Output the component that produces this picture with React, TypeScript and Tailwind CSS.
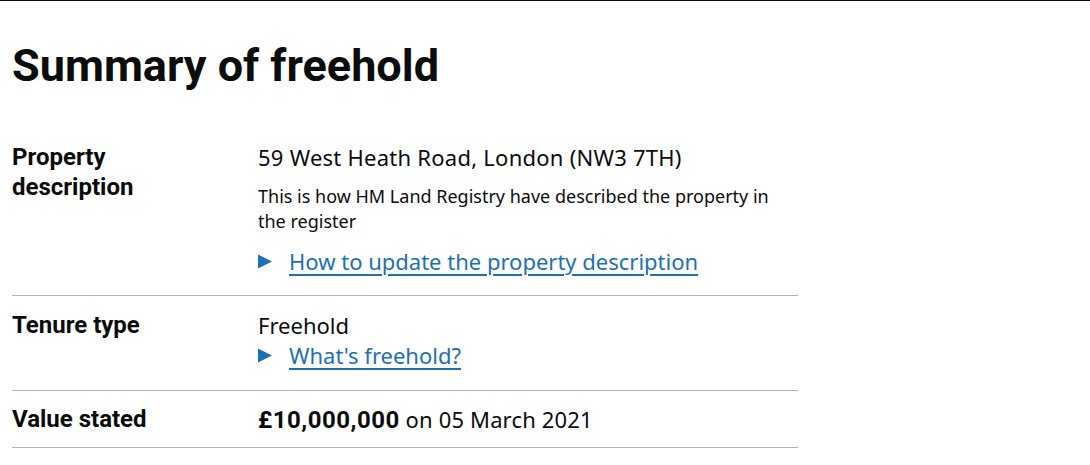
import React from "react";

const noto = { fontFamily: '"Noto Sans", Arial, sans-serif' };
const roboto = { fontFamily: 'Roboto, Arial, sans-serif' };

function Triangle() {
  return (
    <svg width="14" height="15" viewBox="0 0 14 15" className="shrink-0">
      <polygon points="0,0.5 14,7.5 0,14.5" fill="#1d70b8" />
    </svg>
  );
}

function DetailsLink({ children }: { children: React.ReactNode }) {
  return (
    <div className="flex items-center gap-[17px]">
      <Triangle />
      <a
        href="#"
        className="text-[22px] leading-[30px] text-[#1d70b8] underline decoration-[2px] underline-offset-[4px]"
        style={noto}
      >
        {children}
      </a>
    </div>
  );
}

function Label({ children }: { children: React.ReactNode }) {
  return (
    <dt className="pr-[36px] text-[24px] font-bold leading-[30px]" style={roboto}>
      {children}
    </dt>
  );
}

export default function App() {
  return (
    <div
      className="min-h-[465px] w-[1090px] bg-white border-t border-[#0b0c0c] text-[#0b0c0c]"
      style={noto}
    >
      <div className="px-[12px]">
        <h1 className="pt-[40px] mb-[39px] text-[45px] font-bold leading-[50px]" style={roboto}>
          Summary of freehold
        </h1>
        <dl className="w-[786px]">
          <div className="grid grid-cols-[246px_1fr] border-b border-[#b1b4b6] pt-[12px] pb-[19px]">
            <Label>Property description</Label>
            <dd>
              <p className="text-[22px] leading-[30px] tracking-[0.25px]">
                59 West Heath Road, London (NW3 7TH)
              </p>
              <p className="mt-[12px] max-w-[530px] text-[18px] leading-[25px]">
                This is how HM Land Registry have described the property in the register
              </p>
              <div className="mt-[12px]">
                <DetailsLink>How to update the property description</DetailsLink>
              </div>
            </dd>
          </div>
          <div className="grid grid-cols-[246px_1fr] border-b border-[#b1b4b6] pt-[14px] pb-[20px]">
            <Label>Tenure type</Label>
            <dd>
              <p className="text-[22px] leading-[30px]">Freehold</p>
              <DetailsLink>What's freehold?</DetailsLink>
            </dd>
          </div>
          <div className="grid grid-cols-[246px_1fr] border-b border-[#b1b4b6] pt-[13px] pb-[12px]">
            <Label>Value stated</Label>
            <dd className="text-[22px] leading-[30px] tracking-[0.15px]">
              <span className="text-[24px] font-bold tracking-[0.5px]" style={roboto}>
                £10,000,000
              </span>{" "}
              on 05 March 2021
            </dd>
          </div>
        </dl>
      </div>
    </div>
  );
}
